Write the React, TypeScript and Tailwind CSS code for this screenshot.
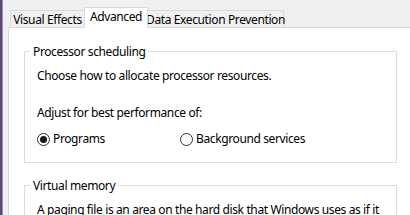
import React from "react";

const font = { fontFamily: '"Segoe UI", "Noto Sans", sans-serif' };

function Radio({ checked, label, className }: { checked?: boolean; label: string; className?: string }) {
  return (
    <label className={`flex items-center gap-[3px] ${className ?? ""}`}>
      <span className="w-[13px] h-[13px] rounded-full border border-[#333333] bg-white flex items-center justify-center">
        {checked && <span className="w-[7px] h-[7px] rounded-full bg-[#1a1a1a]" />}
      </span>
      <span>{label}</span>
    </label>
  );
}

export default function App() {
  return (
    <div
      className="w-[410px] h-[215px] bg-[#f0f0f0] flex overflow-hidden text-[12px] leading-[16px] tracking-[-0.38px] text-black whitespace-nowrap"
      style={font}
    >
      {/* edge of the window behind */}
      <div className="w-[2px] h-full bg-[#5a4a70]" />
      <div className="w-[1px] h-full bg-[#a08bd0]" />

      <div className="flex-1 flex flex-col pl-[5px]">
        {/* Tabs */}
        <div className="flex items-end pt-[7px] pl-[2px]">
          <div className="w-[74px] h-[17px] border-t border-l border-[#d9d9d9] bg-[#f0f0f0] flex items-center justify-center pt-[1px]">
            Visual Effects
          </div>
          <div className="relative z-10 w-[64px] h-[21px] -mb-[1px] border border-b-0 border-[#d9d9d9] bg-white flex justify-center pt-[1px]">
            Advanced
          </div>
          <div className="w-[136px] h-[17px] border-t border-r border-[#d9d9d9] bg-[#f0f0f0] flex items-center justify-center pt-[1px]">
            Data Execution Prevention
          </div>
        </div>

        {/* Page */}
        <div className="flex-1 bg-white border-t border-l border-[#d9d9d9] pl-[15px] pt-[15px]">
          <fieldset className="w-[373px] border border-[#dcdcdc]">
            <legend className="ml-[5px] px-[3px]">
              <span className="relative top-[1px]">Processor scheduling</span>
            </legend>
            <div className="pl-[12px] pt-[9px] pb-[15px]">
              <p>Choose how to allocate processor resources.</p>
              <p className="mt-[21px]">Adjust for best performance of:</p>
              <div className="flex mt-[10px]">
                <Radio checked label="Programs" className="w-[143px]" />
                <Radio label="Background services" />
              </div>
            </div>
          </fieldset>

          <fieldset className="w-[373px] mt-[14px] border border-[#dcdcdc]">
            <legend className="ml-[5px] px-[3px]">
              <span className="relative top-[1px]">Virtual memory</span>
            </legend>
            <div className="pl-[12px] pt-[9px]">
              <p>A paging file is an area on the hard disk that Windows uses as if it</p>
            </div>
          </fieldset>
        </div>
      </div>
    </div>
  );
}
